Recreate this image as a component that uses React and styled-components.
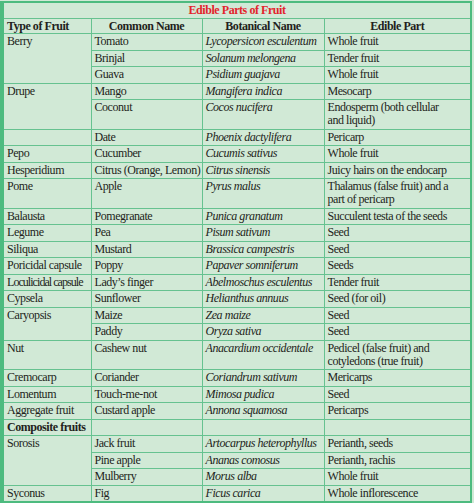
import React from "react"
import styled, { createGlobalStyle } from "styled-components"

const GlobalStyle = createGlobalStyle`
  html, body {
    margin: 0;
    padding: 0;
    background: #d1e9d6;
  }
`

const rows = [
  { type: "Berry", span: 3, common: "Tomato", bot: "Lycopersicon esculentum", part: "Whole fruit" },
  { common: "Brinjal", bot: "Solanum melongena", part: "Tender fruit" },
  { common: "Guava", bot: "Psidium guajava", part: "Whole fruit" },
  { type: "Drupe", span: 2, common: "Mango", bot: "Mangifera indica", part: "Mesocarp" },
  { common: "Coconut", bot: "Cocos nucifera", part: ["Endosperm (both cellular", "and liquid)"] },
  { type: "", common: "Date", bot: "Phoenix dactylifera", part: "Pericarp" },
  { type: "Pepo", common: "Cucumber", bot: "Cucumis sativus", part: "Whole fruit" },
  { type: "Hesperidium", common: "Citrus (Orange, Lemon)", bot: "Citrus sinensis", part: "Juicy hairs on the endocarp" },
  { type: "Pome", common: "Apple", bot: "Pyrus malus", part: ["Thalamus (false fruit) and a", "part of pericarp"] },
  { type: "Balausta", common: "Pomegranate", bot: "Punica granatum", part: "Succulent testa of the seeds" },
  { type: "Legume", common: "Pea", bot: "Pisum sativum", part: "Seed" },
  { type: "Siliqua", common: "Mustard", bot: "Brassica campestris", part: "Seed" },
  { type: "Poricidal capsule", common: "Poppy", bot: "Papaver somniferum", part: "Seeds" },
  { type: "Loculicidal capsule", tight: true, common: "Lady’s finger", bot: "Abelmoschus esculentus", part: "Tender fruit" },
  { type: "Cypsela", common: "Sunflower", bot: "Helianthus annuus", part: "Seed (for oil)" },
  { type: "Caryopsis", span: 2, common: "Maize", bot: "Zea maize", part: "Seed" },
  { common: "Paddy", bot: "Oryza sativa", part: "Seed" },
  { type: "Nut", common: "Cashew nut", bot: "Anacardium occidentale", part: ["Pedicel (false fruit) and", "cotyledons (true fruit)"] },
  { type: "Cremocarp", common: "Coriander", bot: "Coriandrum sativum", part: "Mericarps" },
  { type: "Lomentum", common: "Touch-me-not", bot: "Mimosa pudica", part: "Seed" },
  { type: "Aggregate fruit", common: "Custard apple", bot: "Annona squamosa", part: "Pericarps" },
  { type: "Composite fruits", group: true, common: "", bot: "", part: "" },
  { type: "Sorosis", span: 3, common: "Jack fruit", bot: "Artocarpus heterophyllus", part: "Perianth, seeds" },
  { common: "Pine apple", bot: "Ananas comosus", part: "Perianth, rachis" },
  { common: "Mulberry", bot: "Morus alba", part: "Whole fruit" },
  { type: "Syconus", common: "Fig", bot: "Ficus carica", part: "Whole inflorescence" },
]

const Lines = ({ text }) =>
  Array.isArray(text)
    ? text.map((t, i) => (
        <React.Fragment key={i}>
          {i > 0 && <br />}
          {t}
        </React.Fragment>
      ))
    : text

const App = () => {
  return (
    <Wrapper>
      <GlobalStyle />
      <Table>
        <colgroup>
          <Col $w={89} />
          <Col $w={111} />
          <Col $w={122} />
          <Col />
        </colgroup>
        <thead>
          <tr>
            <Title colSpan={4}>Edible Parts of Fruit</Title>
          </tr>
          <tr>
            <Head $align="left">Type of Fruit</Head>
            <Head>Common Name</Head>
            <Head>Botanical Name</Head>
            <Head>Edible Part</Head>
          </tr>
        </thead>
        <tbody>
          {rows.map((r, i) => (
            <tr key={i}>
              {r.type !== undefined && (
                <Cell rowSpan={r.span || 1} $bold={r.group} $tight={r.tight}>
                  {r.type}
                </Cell>
              )}
              <Cell>{r.common}</Cell>
              <Cell $italic>{r.bot}</Cell>
              <Cell>
                <Lines text={r.part} />
              </Cell>
            </tr>
          ))}
        </tbody>
      </Table>
    </Wrapper>
  )
}

const Wrapper = styled.div`
  padding: 1px 2px 0 0;
  font-family: "Liberation Serif", "DejaVu Serif", serif;
  color: #231f20;
`

const Table = styled.table`
  width: 472px;
  table-layout: fixed;
  border-collapse: collapse;
  background: #d1e9d6;
  border-top: 2px solid #4dbb7f;
  border-right: 2px solid #4dbb7f;
  border-bottom: 2px solid #4dbb7f;
  border-left: 4px solid #4dbb7f;
`

const Col = styled.col`
  width: ${(p) => (p.$w ? `${p.$w}px` : "auto")};
`

const Title = styled.th`
  height: 15px;
  padding: 0;
  font-size: 12px;
  line-height: 15px;
  font-weight: 700;
  letter-spacing: -0.45px;
  color: #e3242b;
  text-align: center;
  border-bottom: 1px solid #66c290;
`

const Head = styled.th`
  height: 14px;
  padding: 0 3px;
  font-size: 12px;
  line-height: 14px;
  font-weight: 700;
  letter-spacing: -0.45px;
  text-align: ${(p) => p.$align || "center"};
  white-space: nowrap;
  border: 1px solid #66c290;
`

const Cell = styled.td`
  height: 15.5px;
  box-sizing: border-box;
  padding: 1px 3px 1.5px 3px;
  font-size: 12px;
  line-height: 13px;
  letter-spacing: ${(p) => (p.$tight ? "-0.95px" : "-0.45px")};
  vertical-align: top;
  white-space: nowrap;
  font-style: ${(p) => (p.$italic ? "italic" : "normal")};
  font-weight: ${(p) => (p.$bold ? 700 : 400)};
  border: 1px solid #66c290;
`

export default App
